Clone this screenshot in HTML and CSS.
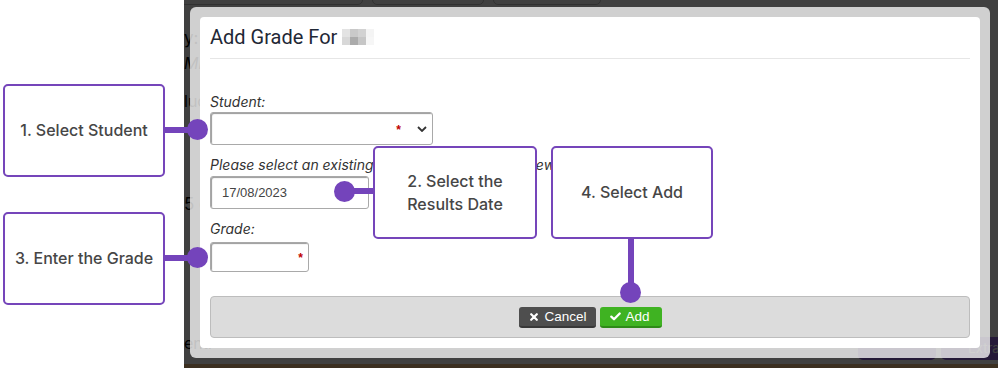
FILE: index.html
```html
<!DOCTYPE html>
<html lang="en">
<head>
<meta charset="utf-8">
<title>Add Grade</title>
<link rel="stylesheet" href="styles.css">
</head>
<body>
<div class="shot">
  <div class="margin-area"></div>
  <div class="app">
    <div class="page">
      <div class="tabs"><span class="tab t1"></span><span class="tab t2"></span><span class="tab t3"></span></div>
      <p class="bg-line l1">y:</p>
      <p class="bg-line l2">Mis</p>
      <p class="bg-line l3">lud</p>
      <p class="bg-line l4">5 g</p>
      <div class="bg-row">
        <p class="bg-line l5">enti</p>
        <div class="page-btns"><span class="page-btn pa"></span><span class="page-btn pb">Extract</span></div>
      </div>
      <div class="page-footer"></div>
    </div>
    <div class="overlay">
      <div class="modal">
        <div class="modal-body">
          <h2 class="modal-title"><span class="title-text">Add Grade For</span>
            <span class="mosaic">
              <i class="m1"></i><i class="m2"></i><i class="m3"></i><i class="m4"></i>
              <i class="m5"></i><i class="m6"></i><i class="m7"></i><i class="m8"></i>
            </span>
          </h2>
          <div class="divider"></div>
          <label class="field-label l-student">Student:</label>
          <div class="select">
            <span class="req">*</span>
            <svg class="chev" width="10" height="6" viewBox="0 0 10 6"><polyline points="1,1 5,5 9,1" fill="none" stroke="#333" stroke-width="1.8"/></svg>
          </div>
          <label class="field-label l-date">Please select an existing results date or enter a new date:</label>
          <div class="input date">17/08/2023</div>
          <label class="field-label l-grade">Grade:</label>
          <div class="input grade"><span class="req">*</span></div>
          <div class="footer">
            <button class="btn cancel"><svg width="8" height="8" viewBox="0 0 8 8"><path d="M1.2 1.2 L6.8 6.8 M6.8 1.2 L1.2 6.8" stroke="#fff" stroke-width="2.2" stroke-linecap="round"/></svg>Cancel</button>
            <button class="btn add"><svg width="11" height="9" viewBox="0 0 11 9"><path d="M1.3 4.6 L4 7.3 L9.7 1.5" fill="none" stroke="#fff" stroke-width="2.3" stroke-linecap="round" stroke-linejoin="round"/></svg>Add</button>
          </div>
        </div>
      </div>
    </div>
  </div>

  <div class="line h1"></div>
  <div class="line h3"></div>
  <div class="line h2"></div>
  <div class="line v4"></div>
  <div class="dot d1"></div>
  <div class="dot d2"></div>
  <div class="dot d3"></div>
  <div class="dot d4"></div>
  <div class="callout c1">1. Select Student</div>
  <div class="callout c3">3. Enter the Grade</div>
  <div class="callout c2">2. Select the<br>Results Date</div>
  <div class="callout c4">4. Select Add</div>
</div>
</body>
</html>
```
FILE: styles.css
```css
html, body {
  margin: 0;
  padding: 0;
}
body {
  width: 998px;
  height: 368px;
  overflow: hidden;
  background: #fff;
  font-family: Inter, "Noto Sans", sans-serif;
}
.shot {
  position: relative;
  display: flex;
  width: 998px;
  height: 368px;
}
.margin-area {
  flex: none;
  width: 184px;
  background: #fff;
}
.app {
  position: relative;
  flex: 1;
  height: 368px;
  overflow: hidden;
}

/* page behind the dialog */
.page {
  height: 100%;
  background: #fff;
  display: flex;
  flex-direction: column;
  color: #000;
}
.tabs {
  display: flex;
  gap: 9px;
  height: 5px;
  margin-left: -4px;
}
.tab {
  height: 15px;
  margin-top: -10px;
  border: 1px solid #c4c4c4;
  border-radius: 0 0 5px 5px;
  box-sizing: border-box;
}
.t1 { width: 183px; }
.t2 { width: 112px; }
.t3 { width: 108px; }
.bg-line {
  margin: 0;
  white-space: nowrap;
  font-size: 16px;
  line-height: 20px;
}
.l1 { margin-top: 23px; font-size: 17px; }
.l2 { margin-top: 5px; font-style: italic; }
.l3 { margin-top: 18px; }
.l4 { margin-top: 83px; font-size: 17px; }
.bg-row {
  display: flex;
  justify-content: space-between;
  align-items: flex-start;
  margin-top: 121px;
  margin-right: -30px;
}
.l5 { margin-top: -2px; }
.page-btns {
  display: flex;
  gap: 5px;
  margin-top: 2px;
}
.page-btn {
  height: 23px;
  border-radius: 5px;
  background: #9464e0;
  color: #fff;
  font-size: 13px;
  line-height: 23px;
  box-sizing: border-box;
}
.pa { width: 78px; }
.pb { width: 87px; padding-left: 27px; }
.page-footer {
  margin-top: auto;
  height: 4px;
  background: #ecbc80;
}

/* dialog */
.overlay {
  position: absolute;
  inset: 0;
  background: rgba(0, 0, 0, 0.75);
  padding: 7px 0 0 6px;
  box-sizing: border-box;
}
.modal {
  width: 800px;
  box-sizing: border-box;
  padding: 10px;
  background: rgba(255, 255, 255, 0.755);
  border-radius: 6px;
}
.modal-body {
  background: #fff;
  border-radius: 4px;
  padding: 8px 10px 10px;
}
.modal-title {
  margin: 0;
  display: flex;
  align-items: center;
  gap: 5px;
  font-family: Roboto, Inter, sans-serif;
  font-size: 20px;
  line-height: 24px;
  font-weight: 400;
  color: #1f2836;
}
.mosaic {
  display: grid;
  grid-template-columns: repeat(4, 8px);
  grid-template-rows: repeat(2, 8px);
  width: 32px;
  height: 16px;
}
.mosaic i { display: block; }
.m1 { background: #e3e3e3; }
.m2 { background: #c9c9c9; }
.m3 { background: #d2d2d2; }
.m4 { background: #f4f4f4; }
.m5 { background: #d8d8d8; }
.m6 { background: #ababab; }
.m7 { background: #c6c6c6; }
.m8 { background: #f6f6f6; }
.divider {
  height: 1px;
  margin-top: 9px;
  background: #e6e6e6;
}
.field-label {
  display: block;
  font-style: italic;
  font-size: 14px;
  line-height: 20px;
  color: #333;
  white-space: nowrap;
}
.l-student { margin-top: 33px; }
.l-date { margin-top: 10px; }
.l-grade { margin-top: 10px; }
.select, .input {
  box-sizing: border-box;
  border: 1px solid #a9a9a9;
  border-radius: 3px;
  box-shadow: inset 1px 1px 1px rgba(0, 0, 0, 0.4);
  display: flex;
  align-items: center;
  background: #fff;
}
.select {
  width: 223px;
  height: 33px;
  justify-content: flex-end;
  gap: 16px;
  padding-right: 5px;
}
.req {
  color: #c00000;
  font-family: "Liberation Sans", Arial, sans-serif;
  font-weight: 700;
  font-size: 12px;
  line-height: 8px;
  height: 8px;
  margin-top: 2px;
}
.input.date {
  width: 159px;
  height: 33px;
  margin-top: 1px;
  padding-left: 11px;
  font-family: "Liberation Sans", Arial, sans-serif;
  font-size: 13px;
  color: #444;
}
.input.grade {
  width: 99px;
  height: 30px;
  margin-top: 3px;
  justify-content: flex-end;
  padding-right: 5px;
}
.footer {
  margin-top: 24px;
  height: 42px;
  box-sizing: border-box;
  border: 1px solid #bdbdbd;
  border-radius: 4px;
  background: #dcdcdc;
  display: flex;
  justify-content: center;
  align-items: flex-start;
  gap: 4px;
  padding-top: 10px;
}
.btn {
  height: 21px;
  border: none;
  border-radius: 3px;
  display: flex;
  align-items: center;
  gap: 7px;
  color: #fff;
  font-family: "Liberation Sans", Arial, sans-serif;
  font-size: 13.5px;
  padding: 0;
  margin: 0;
  box-sizing: border-box;
}
.btn.cancel {
  width: 77px;
  padding-left: 11px;
  background: #4e4e4e;
  border-bottom: 2px solid #383838;
}
.btn.add {
  width: 62px;
  padding-left: 10px;
  gap: 5px;
  background: #3fb322;
  border-bottom: 2px solid #2e8a18;
}

/* annotation callouts */
.callout {
  position: absolute;
  box-sizing: border-box;
  border: 2px solid #7545ba;
  border-radius: 5px;
  background: #fff;
  display: flex;
  align-items: center;
  justify-content: center;
  text-align: center;
  font-family: Inter, "Noto Sans", sans-serif;
  font-size: 16px;
  font-weight: 500;
  line-height: 23px;
  color: #464646;
}
.c1 { left: 3px; top: 84px; width: 162px; height: 93px; }
.c3 { left: 3px; top: 212px; width: 162px; height: 93px; }
.c2 { left: 373px; top: 146px; width: 164px; height: 93px; }
.c4 { left: 551px; top: 146px; width: 162px; height: 93px; }
.line {
  position: absolute;
  background: #7444bb;
}
.h1 { left: 164px; top: 127px; width: 34px; height: 6px; }
.h3 { left: 164px; top: 255px; width: 34px; height: 6px; }
.h2 { left: 345px; top: 188px; width: 30px; height: 6px; }
.v4 { left: 628px; top: 237px; width: 6px; height: 56px; }
.dot {
  position: absolute;
  width: 21px;
  height: 21px;
  border-radius: 50%;
  background: #7444bb;
}
.d1 { left: 187px; top: 119px; }
.d3 { left: 187px; top: 247px; }
.d2 { left: 334px; top: 181px; }
.d4 { left: 620px; top: 282px; }
```
